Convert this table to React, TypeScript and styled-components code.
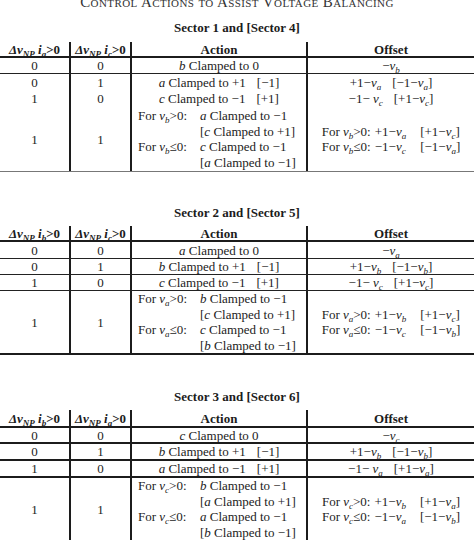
import React from 'react';
import styled, { createGlobalStyle } from 'styled-components';

const SERIF = `"Liberation Serif", "Times New Roman", "DejaVu Serif", serif`;

const Global = createGlobalStyle`
  html, body { margin: 0; padding: 0; background: #ffffff; }
  body {
    font-family: ${SERIF};
    color: #1c1c1c;
    width: 474px;
    height: 540px;
    overflow: hidden;
  }
`;

const Page = styled.div`
  width: 474px;
  display: flex;
  flex-direction: column;
  font-family: ${SERIF};
`;

const Title = styled.div`
  margin-top: -5px;
  height: 14px;
  line-height: 14px;
  font-size: 15px;
  font-variant: small-caps;
  letter-spacing: 0.4px;
  text-align: center;
  color: #333;
  white-space: nowrap;
`;

const Section = styled.section<{ $gap: number }>`
  margin-top: ${(p) => p.$gap}px;
  display: flex;
  flex-direction: column;
`;

const Caption = styled.div<{ $below: number }>`
  font-size: 13px;
  font-weight: bold;
  line-height: 16px;
  text-align: center;
  margin-bottom: ${(p) => p.$below}px;
`;

type Line = 'none' | 'thin' | 'thick' | 'gray';

const lineCss: Record<Line, string> = {
  none: 'none',
  thin: '1px solid #222',
  thick: '2px solid #1c1c1c',
  gray: '1px solid #777',
};

const Row = styled.div<{ $h: number; $line: Line; $head?: boolean }>`
  display: grid;
  grid-template-columns: 69px 61px 176px 1fr;
  height: ${(p) => p.$h}px;
  box-sizing: border-box;
  border-bottom: ${(p) => lineCss[p.$line]};
  font-family: ${SERIF};
  font-size: 13px;
  font-weight: ${(p) => (p.$head ? 'bold' : 'normal')};
`;

const Cell = styled.div<{ $left?: boolean }>`
  display: flex;
  align-items: center;
  justify-content: ${(p) => (p.$left ? 'flex-start' : 'center')};
  padding-left: ${(p) => (p.$left ? '6px' : '0')};
  white-space: nowrap;
  line-height: 15px;
  &:not(:first-child) {
    border-left: 2px solid #1c1c1c;
  }
`;

const Sub = styled.sub`
  font-size: 9px;
  line-height: 0;
  vertical-align: -3px;
  font-style: italic;
`;

const It = styled.i`
  font-style: italic;
`;

const Bracket = styled.span`
  margin-left: 11px;
`;

const CaseGrid = styled.div`
  display: grid;
  grid-template-columns: 62px auto;
  line-height: 15.5px;
`;

const OffsetGrid = styled.div`
  display: grid;
  grid-template-columns: auto auto auto;
  column-gap: 4px;
  line-height: 15.5px;
  & > span:nth-child(3n) {
    margin-left: 10px;
  }
`;

const V = ({ s }: { s: string }) => (
  <>
    <It>v</It>
    <Sub>{s}</Sub>
  </>
);

const HeadVar = ({ i }: { i: string }) => (
  <span>
    <It>Δv</It>
    <Sub>NP</Sub> <It>i</It>
    <Sub>{i}</Sub>&gt;0
  </span>
);

type CaseProps = {
  c: string;
  p1: string;
  a1: string;
  b1: string;
  p2: string;
  a2: string;
  b2: string;
};

const ActionCases = ({ c, p1, a1, b1, p2, a2, b2 }: CaseProps) => (
  <CaseGrid>
    <span>
      For <V s={c} />&gt;0:
    </span>
    <span>
      <It>{p1}</It> Clamped to {a1}
    </span>
    <span />
    <span>
      [<It>{p2}</It> Clamped to {b1}]
    </span>
    <span>
      For <V s={c} />≤0:
    </span>
    <span>
      <It>{p2}</It> Clamped to {a2}
    </span>
    <span />
    <span>
      [<It>{p1}</It> Clamped to {b2}]
    </span>
  </CaseGrid>
);

const OffsetCases = ({
  c,
  pos,
  posB,
  neg,
  negB,
}: {
  c: string;
  pos: string;
  posB: string;
  neg: string;
  negB: string;
}) => (
  <OffsetGrid>
    <span>
      For <V s={c} />&gt;0:
    </span>
    <span>
      +1−<V s={pos} />
    </span>
    <span>
      [+1−<V s={posB} />]
    </span>
    <span>
      For <V s={c} />≤0:
    </span>
    <span>
      −1−<V s={neg} />
    </span>
    <span>
      [−1−<V s={negB} />]
    </span>
  </OffsetGrid>
);

type SectorData = {
  caption: string;
  gap: number;
  below: number;
  heads: [string, string];
  zero: string;
  plus: string;
  minus: string;
  cond: string;
  heights: number[];
  lines: Line[];
  cases: CaseProps;
  offsets: { pos: string; posB: string; neg: string; negB: string };
};

const sectors: SectorData[] = [
  {
    caption: 'Sector 1 and [Sector 4]',
    gap: 11,
    below: 6,
    heads: ['a', 'c'],
    zero: 'b',
    plus: 'a',
    minus: 'c',
    cond: 'b',
    heights: [16, 16, 16, 17, 65],
    lines: ['thick', 'thin', 'none', 'none', 'gray'],
    cases: { c: 'b', p1: 'a', a1: '−1', b1: '+1', p2: 'c', a2: '−1', b2: '−1' },
    offsets: { pos: 'a', posB: 'c', neg: 'c', negB: 'a' },
  },
  {
    caption: 'Sector 2 and [Sector 5]',
    gap: 33,
    below: 5,
    heads: ['b', 'c'],
    zero: 'a',
    plus: 'b',
    minus: 'c',
    cond: 'a',
    heights: [16, 17, 16, 16, 64],
    lines: ['thick', 'thin', 'thin', 'thin', 'thick'],
    cases: { c: 'a', p1: 'b', a1: '−1', b1: '+1', p2: 'c', a2: '−1', b2: '−1' },
    offsets: { pos: 'b', posB: 'c', neg: 'c', negB: 'b' },
  },
  {
    caption: 'Sector 3 and [Sector 6]',
    gap: 34,
    below: 5,
    heads: ['b', 'a'],
    zero: 'c',
    plus: 'b',
    minus: 'a',
    cond: 'c',
    heights: [18, 16, 17, 17, 64],
    lines: ['thick', 'thick', 'thick', 'thick', 'thick'],
    cases: { c: 'c', p1: 'b', a1: '−1', b1: '+1', p2: 'a', a2: '−1', b2: '−1' },
    offsets: { pos: 'b', posB: 'a', neg: 'a', negB: 'b' },
  },
];

const Sector = ({ d }: { d: SectorData }) => (
  <Section $gap={d.gap}>
    <Caption $below={d.below}>{d.caption}</Caption>
    <Row $h={d.heights[0]} $line={d.lines[0]} $head>
      <Cell>
        <HeadVar i={d.heads[0]} />
      </Cell>
      <Cell>
        <HeadVar i={d.heads[1]} />
      </Cell>
      <Cell>Action</Cell>
      <Cell>Offset</Cell>
    </Row>
    <Row $h={d.heights[1]} $line={d.lines[1]}>
      <Cell>0</Cell>
      <Cell>0</Cell>
      <Cell>
        <span>
          <It>{d.zero}</It> Clamped to 0
        </span>
      </Cell>
      <Cell>
        <span>
          −<V s={d.zero} />
        </span>
      </Cell>
    </Row>
    <Row $h={d.heights[2]} $line={d.lines[2]}>
      <Cell>0</Cell>
      <Cell>1</Cell>
      <Cell>
        <span>
          <It>{d.plus}</It> Clamped to +1<Bracket>[−1]</Bracket>
        </span>
      </Cell>
      <Cell>
        <span>
          +1−<V s={d.plus} />
          <Bracket>
            [−1−<V s={d.plus} />]
          </Bracket>
        </span>
      </Cell>
    </Row>
    <Row $h={d.heights[3]} $line={d.lines[3]}>
      <Cell>1</Cell>
      <Cell>0</Cell>
      <Cell>
        <span>
          <It>{d.minus}</It> Clamped to −1<Bracket>[+1]</Bracket>
        </span>
      </Cell>
      <Cell>
        <span>
          −1− <V s={d.minus} />
          <Bracket>
            [+1−<V s={d.minus} />]
          </Bracket>
        </span>
      </Cell>
    </Row>
    <Row $h={d.heights[4]} $line={d.lines[4]}>
      <Cell>1</Cell>
      <Cell>1</Cell>
      <Cell $left>
        <ActionCases {...d.cases} />
      </Cell>
      <Cell>
        <OffsetCases c={d.cond} {...d.offsets} />
      </Cell>
    </Row>
  </Section>
);

export default function App() {
  return (
    <Page>
      <Global />
      <Title>Control Actions to Assist Voltage Balancing</Title>
      {sectors.map((s) => (
        <Sector key={s.caption} d={s} />
      ))}
    </Page>
  );
}
